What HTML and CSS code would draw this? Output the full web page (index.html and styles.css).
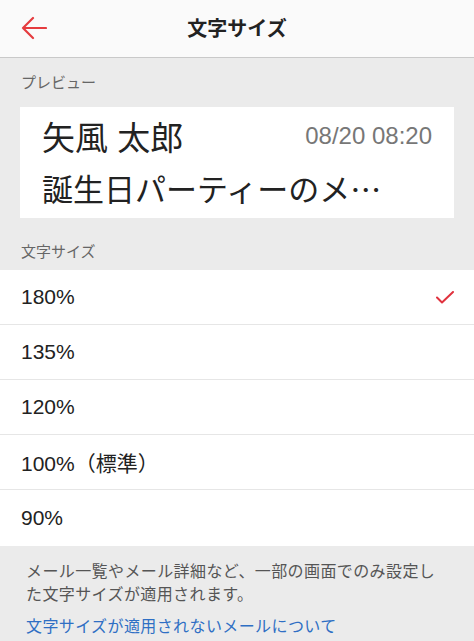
FILE: index.html
```html
<!DOCTYPE html>
<html lang="ja">
<head>
    <meta charset="UTF-8">
    <meta name="viewport" content="width=device-width, initial-scale=1.0">
    <title>文字サイズ</title>
    <link rel="stylesheet" href="styles.css">
</head>
<body>
    <header class="topbar">
        <span class="back">
            <svg width="26" height="24" viewBox="0 0 26 24">
                <path d="M25 12 H2 M12 2 L2 12 L12 22" fill="none" stroke="#e53c3f" stroke-width="2.2" stroke-linecap="round" stroke-linejoin="round"/>
            </svg>
        </span>
        <h1 class="title">文字サイズ</h1>
    </header>

    <section class="preview">
        <div class="label">プレビュー</div>
        <div class="card">
            <div class="card-row">
                <span class="name">矢風 太郎</span>
                <span class="date">08/20 08:20</span>
            </div>
            <div class="subject">誕生日パーティーのメ…</div>
        </div>
        <div class="label label-size">文字サイズ</div>
    </section>

    <ul class="sizes">
        <li class="size selected">
            180%
            <svg class="check" width="18" height="13" viewBox="0 0 18 13">
                <polyline points="1,6.5 6,11.5 17,1" fill="none" stroke="#e0323e" stroke-width="2" stroke-linecap="round" stroke-linejoin="round"/>
            </svg>
        </li>
        <li class="size">135%</li>
        <li class="size">120%</li>
        <li class="size">100%（標準）</li>
        <li class="size">90%</li>
    </ul>

    <footer class="note">
        <p>メール一覧やメール詳細など、一部の画面でのみ設定した文字サイズが適用されます。</p>
        <a class="link" href="#">文字サイズが適用されないメールについて</a>
    </footer>
</body>
</html>
```

FILE: styles.css
```css
* {
    box-sizing: border-box;
}
body {
    margin: 0;
    background: #ebebeb;
    font-family: "Liberation Sans", "Noto Sans CJK JP", sans-serif;
    color: #222;
}
.topbar {
    height: 58px;
    background: #fafafa;
    border-bottom: 1px solid #c9c9c9;
    display: flex;
    align-items: center;
    justify-content: center;
    position: relative;
}
.back {
    position: absolute;
    left: 21px;
    top: 16px;
    height: 24px;
}
.title {
    margin: 0;
    font-size: 20px;
    font-weight: bold;
    color: #222;
    line-height: 24px;
}
.preview {
    padding: 0 20px;
}
.label {
    font-size: 15px;
    line-height: 20px;
    color: #666;
    padding: 15px 1px 14px;
}
.label-size {
    padding: 24px 1px 8px;
}
.card {
    background: #fff;
    padding: 3px 22px 4px;
}
.card-row {
    display: flex;
    justify-content: space-between;
    align-items: center;
    height: 52px;
}
.name {
    font-size: 33px;
    color: #222;
}
.date {
    font-size: 24px;
    color: #777;
}
.subject {
    font-family: "Noto Sans CJK JP", sans-serif;
    font-size: 31px;
    line-height: 52px;
    white-space: nowrap;
    color: #222;
}
.sizes {
    list-style: none;
    margin: 0;
    padding: 0;
    background: #fff;
}
.size {
    height: 55px;
    display: flex;
    align-items: center;
    justify-content: space-between;
    padding: 0 20px 0 21px;
    font-size: 21px;
    color: #222;
    border-bottom: 1px solid #e6e6e6;
}
.size:last-child {
    border-bottom: none;
    height: 56px;
}
.note {
    padding: 14px 26px 10px;
    font-size: 16px;
    letter-spacing: 0.4px;
    line-height: 23px;
    color: #555;
}
.note p {
    margin: 0;
}
.link {
    display: block;
    margin-top: 9px;
    color: #2f6fc4;
    text-decoration: none;
}
```
